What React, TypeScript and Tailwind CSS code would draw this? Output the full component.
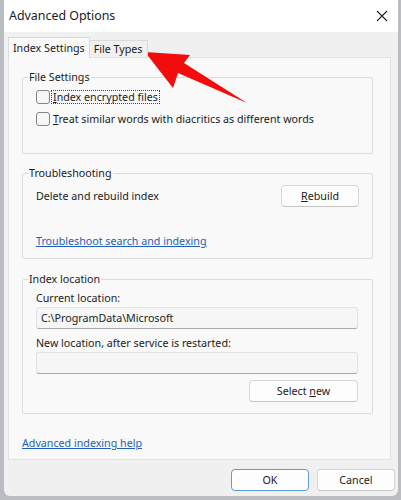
import React from "react";

const font = { fontFamily: '"Noto Sans", "Liberation Sans", sans-serif' };

function Btn({ children, w, primary }: { children: React.ReactNode; w: string; primary?: boolean }) {
  return (
    <div
      className={`${w} h-[22px] flex items-center justify-center rounded-[4px] bg-[#fdfdfd] text-[10.7px] text-[#1b1b1b] ${
        primary ? "border border-[#5d9bd8]" : "border border-[#d6d6d6] border-b-[#c4c4c4]"
      }`}
    >
      <span>{children}</span>
    </div>
  );
}

function Check({ children, focus }: { children: React.ReactNode; focus?: boolean }) {
  return (
    <div className="flex items-center h-[22px]">
      <div className="w-[14px] h-[14px] rounded-[3px] border border-[#858585] bg-[#f7f7f7]" />
      <div
        className={`ml-[1px] px-[1px] leading-[12px] text-[10.7px] text-[#1b1b1b] ${
          focus ? "border border-dotted border-[#444]" : "border border-transparent"
        }`}
      >
        {children}
      </div>
    </div>
  );
}

function TextBox({ value }: { value?: string }) {
  return (
    <div className="h-[22px] w-full rounded-[3px] bg-[#f6f6f6] border border-[#e2e2e2] border-b-[#a9a9a9] flex items-center px-[4px] text-[10.7px] text-[#1b1b1b]">
      {value}
    </div>
  );
}

const legend = "-ml-[8px] px-[1px] text-[10.7px] leading-[16px] text-[#1b1b1b]";
const txt = "text-[10.7px] leading-[16px] text-[#1b1b1b]";
const link = "text-[10.7px] leading-[16px] text-[#1f5fb8] underline";

export default function App() {
  return (
    <div className="relative w-[401px] h-[500px] bg-[#b9bdc2] pl-[3px] pr-[2px] pb-[3px] overflow-hidden" style={font}>
      <div className="h-full flex flex-col bg-[#f0f0f0] border border-t-0 border-[#bdbdbd] rounded-b-[7px] overflow-hidden">
        {/* title bar */}
        <div className="h-[32px] bg-white flex items-center justify-between pl-[5px] pr-[10px] shrink-0">
          <span className="text-[12.4px] text-[#1b1b1b]">Advanced Options</span>
          <svg width="12" height="12" viewBox="0 0 12 12">
            <path d="M1 1 L11 11 M11 1 L1 11" stroke="#222" strokeWidth="1.1" fill="none" />
          </svg>
        </div>
        {/* body */}
        <div className="flex flex-col pl-[4px] pr-[7px] pt-[5px]">
          {/* tabs */}
          <div className="flex items-end h-[20px] relative z-10">
            <div className="h-[21px] -mb-[1px] px-[4px] bg-[#f9f9f9] border border-b-0 border-[#dadada] flex items-center text-[10.7px] text-[#1b1b1b]">
              Index Settings
            </div>
            <div className="h-[17px] px-[4px] bg-[#f0f0f0] border border-l-0 border-b-0 border-[#dadada] flex items-center text-[10.7px] text-[#1b1b1b]">
              File Types
            </div>
          </div>
          {/* panel */}
          <div className="h-[403px] bg-[#f9f9f9] border border-[#e3e3e3] pl-[13px] pr-[17px] pt-[11px] flex flex-col">
            <fieldset className="border border-[#dcdcdc] rounded-[2px] pl-[13px] pr-[13px] pb-[23px]">
              <legend className={legend}>File Settings</legend>
              <div className="pt-[1px] flex flex-col">
                <Check focus>
                  <span className="underline">I</span>ndex encrypted files
                </Check>
                <Check>
                  <span className="underline">T</span>reat similar words with diacritics as different words
                </Check>
              </div>
            </fieldset>

            <fieldset className="mt-[11px] border border-[#dcdcdc] rounded-[2px] pl-[13px] pr-[13px] pb-[9px]">
              <legend className={legend}>Troubleshooting</legend>
              <div className="mt-[4px] flex items-center justify-between">
                <span className={txt}>Delete and rebuild index</span>
                <Btn w="w-[78px]">
                  <span className="underline">R</span>ebuild
                </Btn>
              </div>
              <div className={`mt-[26px] ${link}`}>Troubleshoot search and indexing</div>
            </fieldset>

            <fieldset className="mt-[12px] border border-[#dcdcdc] rounded-[2px] pl-[13px] pr-[14px] pb-[11px]">
              <legend className={legend}>Index location</legend>
              <div className={`mt-[3px] ${txt}`}>Current location:</div>
              <div className="mt-[1px]">
                <TextBox value="C:\ProgramData\Microsoft" />
              </div>
              <div className={`mt-[6px] ${txt}`}>New location, after service is restarted:</div>
              <div className="mt-[1px]">
                <TextBox />
              </div>
              <div className="mt-[6px] flex justify-end">
                <Btn w="w-[109px]">
                  Select <span className="underline">n</span>ew
                </Btn>
              </div>
            </fieldset>

            <div className={`mt-[21px] ${link}`}>Advanced indexing help</div>
          </div>
        </div>
        {/* footer */}
        <div className="flex justify-end gap-[8px] pt-[9px] pr-[3px]">
          <Btn w="w-[78px]" primary>
            OK
          </Btn>
          <Btn w="w-[78px]">Cancel</Btn>
        </div>
      </div>

      {/* red annotation arrow */}
      <svg className="absolute left-0 top-0 pointer-events-none" width="401" height="500" viewBox="0 0 401 500">
        <polygon points="145,52 190,55 184,63 247,103 178,73 173,88" fill="#f20c0c" />
      </svg>
    </div>
  );
}
